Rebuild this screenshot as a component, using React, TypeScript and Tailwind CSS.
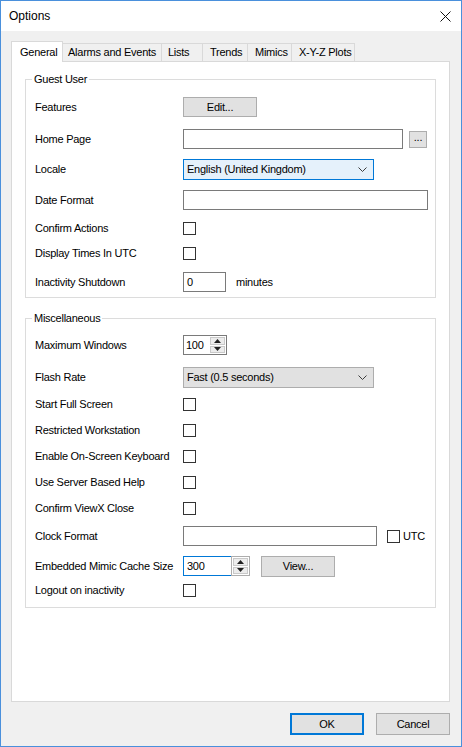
import type { ReactNode } from "react";

const font = "font-['Liberation_Sans',Arial,sans-serif]";

function Checkbox() {
  return <div className="w-[13px] h-[13px] border border-[#333333] bg-white shrink-0" />;
}

function Chevron() {
  return (
    <svg width="9" height="5" viewBox="0 0 9 5" className="shrink-0">
      <path d="M0.5 0.5 L4.5 4.5 L8.5 0.5" fill="none" stroke="#3c3c3c" strokeWidth="1" />
    </svg>
  );
}

function SpinButtons() {
  return (
    <div className="w-[17px] flex flex-col gap-px p-px bg-white">
      <div className="flex-1 flex items-center justify-center bg-[#ececec] border border-[#c9c9c9]">
        <svg width="7" height="4" viewBox="0 0 7 4">
          <path d="M0 4 L3.5 0 L7 4Z" fill="#202020" />
        </svg>
      </div>
      <div className="flex-1 flex items-center justify-center bg-[#ececec] border border-[#c9c9c9]">
        <svg width="7" height="4" viewBox="0 0 7 4">
          <path d="M0 0 L3.5 4 L7 0Z" fill="#202020" />
        </svg>
      </div>
    </div>
  );
}

function Button({ label, className }: { label: string; className: string }) {
  return (
    <div className={`flex items-center justify-center bg-[#e1e1e1] ${className}`}>{label}</div>
  );
}

function Row({ label, className, children }: { label: string; className: string; children?: ReactNode }) {
  return (
    <div className={`flex items-center h-[20px] pl-[9px] ${className}`}>
      <div className="w-[148px] shrink-0 whitespace-nowrap">{label}</div>
      {children}
    </div>
  );
}

function Group({ title, className, children }: { title: string; className: string; children: ReactNode }) {
  return (
    <div className={`relative mx-[13px] border border-[#dcdcdc] flex flex-col ${className}`}>
      <span className="absolute left-[6px] top-[-8px] px-[2px] bg-white leading-[14px]">{title}</span>
      {children}
    </div>
  );
}

const tabs = [
  { label: "Alarms and Events", w: "w-[99px] pl-[5px]" },
  { label: "Lists", w: "w-[41px] pl-[6px]" },
  { label: "Trends", w: "w-[45px] pl-[7px]" },
  { label: "Mimics", w: "w-[44px] pl-[7px]" },
  { label: "X-Y-Z Plots", w: "w-[63px] pl-[7px]" },
];

export default function App() {
  return (
    <div
      className={`w-[462px] h-[747px] flex flex-col border border-[#4a90dc] bg-[#f0f0f0] text-black text-[11px] tracking-[-0.25px] ${font}`}
    >
      {/* Title bar */}
      <div className="h-[30px] bg-white flex items-center justify-between pl-[8px] pr-[10px] shrink-0">
        <span className="text-[12px] tracking-normal">Options</span>
        <svg width="11" height="11" viewBox="0 0 11 11">
          <path d="M0.5 0.5 L10.5 10.5 M10.5 0.5 L0.5 10.5" stroke="#111111" strokeWidth="1" />
        </svg>
      </div>

      {/* Body */}
      <div className="flex-1 flex flex-col pt-[10px] pl-[10px] pr-[11px] pb-[11px]">
        {/* Tabs */}
        <div className="flex items-end h-[20px] shrink-0">
          <div className="relative z-10 -mb-px h-[21px] w-[52px] pl-[8px] flex items-center bg-white border-l border-t border-r border-[#d9d9d9]">
            General
          </div>
          {tabs.map((t) => (
            <div
              key={t.label}
              className={`h-[18px] flex items-center border-t border-r border-[#d9d9d9] whitespace-nowrap ${t.w}`}
            >
              {t.label}
            </div>
          ))}
        </div>

        {/* Panel */}
        <div className="flex-1 bg-white border border-[#d9d9d9] flex flex-col">
          <Group title="Guest User" className="mt-[17px] pb-[5px]">
            <Row label="Features" className="mt-[17px]">
              <Button label="Edit..." className="w-[74px] h-[20px] border border-[#adadad]" />
            </Row>
            <Row label="Home Page" className="mt-[12px]">
              <div className="w-[220px] h-[20px] border border-[#7a7a7a] bg-white" />
              <Button label="..." className="ml-[6px] w-[18px] h-[17px] border border-[#adadad] pb-[3px]" />
            </Row>
            <Row label="Locale" className="mt-[10px]">
              <div className="w-[191px] h-[21px] border border-[#0078d7] bg-[#e5f1fb] flex items-center justify-between pl-[3px] pr-[6px]">
                <span>English (United Kingdom)</span>
                <Chevron />
              </div>
            </Row>
            <Row label="Date Format" className="mt-[11px]">
              <div className="w-[245px] h-[20px] border border-[#7a7a7a] bg-white" />
            </Row>
            <Row label="Confirm Actions" className="mt-[8px]">
              <Checkbox />
            </Row>
            <Row label="Display Times In UTC" className="mt-[5px]">
              <Checkbox />
            </Row>
            <Row label="Inactivity Shutdown" className="mt-[9px]">
              <div className="w-[43px] h-[20px] border border-[#7a7a7a] bg-white flex items-center pl-[3px]">0</div>
              <span className="ml-[10px]">minutes</span>
            </Row>
          </Group>

          <Group title="Miscellaneous" className="mt-[20px] pb-[7px]">
            <Row label="Maximum Windows" className="mt-[16px]">
              <div className="w-[44px] h-[20px] border border-[#7a7a7a] bg-white flex">
                <div className="flex-1 flex items-center pl-[2px]">100</div>
                <SpinButtons />
              </div>
            </Row>
            <Row label="Flash Rate" className="mt-[12px]">
              <div className="w-[191px] h-[21px] border border-[#adadad] bg-[#e1e1e1] flex items-center justify-between pl-[3px] pr-[6px]">
                <span>Fast (0.5 seconds)</span>
                <Chevron />
              </div>
            </Row>
            <Row label="Start Full Screen" className="mt-[7px]">
              <Checkbox />
            </Row>
            <Row label="Restricted Workstation" className="mt-[6px]">
              <Checkbox />
            </Row>
            <Row label="Enable On-Screen Keyboard" className="mt-[6px]">
              <Checkbox />
            </Row>
            <Row label="Use Server Based Help" className="mt-[6px]">
              <Checkbox />
            </Row>
            <Row label="Confirm ViewX Close" className="mt-[6px]">
              <Checkbox />
            </Row>
            <Row label="Clock Format" className="mt-[8px]">
              <div className="w-[194px] h-[20px] border border-[#7a7a7a] bg-white" />
              <div className="ml-[10px] flex items-center gap-[3px]">
                <Checkbox />
                <span>UTC</span>
              </div>
            </Row>
            <Row label="Embedded Mimic Cache Size" className="mt-[10px]">
              <div className="flex h-[20px]">
                <div className="w-[49px] h-full border border-[#0078d7] bg-white flex items-center pl-[3px]">300</div>
                <div className="-ml-px h-full border border-[#adadad] flex">
                  <SpinButtons />
                </div>
              </div>
              <Button label="View..." className="ml-[11px] w-[74px] h-[21px] border border-[#adadad]" />
            </Row>
            <Row label="Logout on inactivity" className="mt-[4px]">
              <Checkbox />
            </Row>
          </Group>
        </div>

        {/* Footer buttons */}
        <div className="flex justify-end gap-[12px] mt-[11px] shrink-0">
          <Button label="OK" className="w-[74px] h-[22px] border-2 border-[#0078d7]" />
          <Button label="Cancel" className="w-[74px] h-[22px] border border-[#adadad]" />
        </div>
      </div>
    </div>
  );
}
